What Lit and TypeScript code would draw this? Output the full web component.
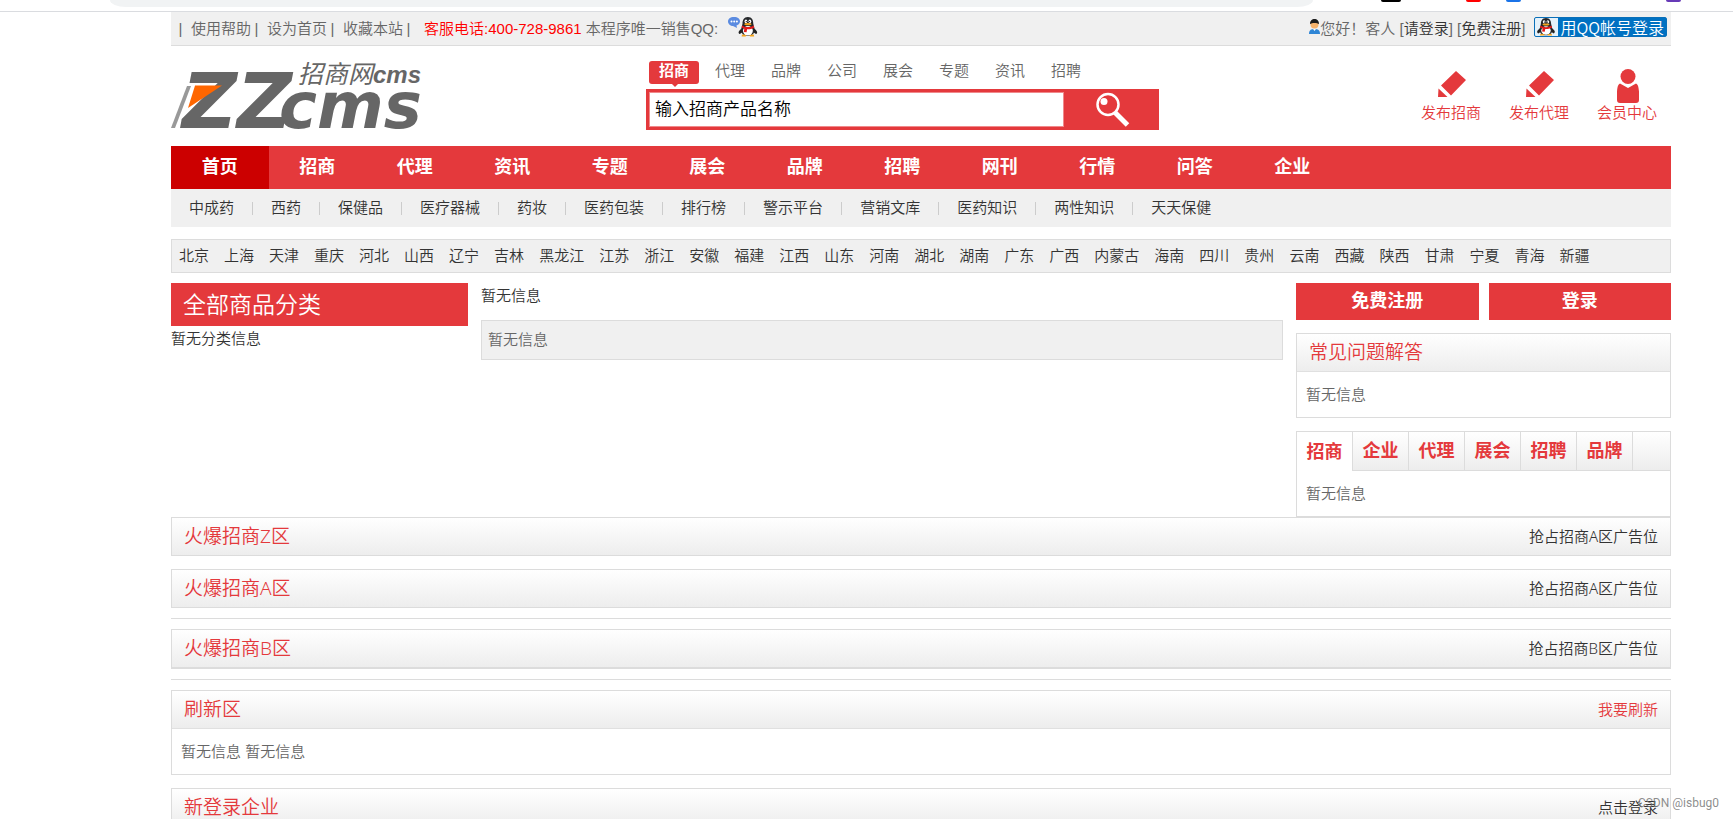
import { LitElement, html, css, svg, nothing } from "lit";
import { customElement, property, state } from "lit/decorators.js";
import { classMap } from "lit/directives/class-map.js";

const SEARCH_TABS = ["招商", "代理", "品牌", "公司", "展会", "专题", "资讯", "招聘"];
const NAV = ["首页", "招商", "代理", "资讯", "专题", "展会", "品牌", "招聘", "网刊", "行情", "问答", "企业"];
const SUBNAV = ["中成药", "西药", "保健品", "医疗器械", "药妆", "医药包装", "排行榜", "警示平台", "营销文库", "医药知识", "两性知识", "天天保健"];
const AREAS = "北京 上海 天津 重庆 河北 山西 辽宁 吉林 黑龙江 江苏 浙江 安徽 福建 江西 山东 河南 湖北 湖南 广东 广西 内蒙古 海南 四川 贵州 云南 西藏 陕西 甘肃 宁夏 青海 新疆".split(" ");
const RANK_TABS = ["招商", "企业", "代理", "展会", "招聘", "品牌"];

const penguin = svg`
  <path d="M4 12c-4 3-4 5-2 6l3-2zM18 12c4 3 4 5 2 6l-3-2z" fill="#222"/>
  <path d="M11 0C6.500 0 5 3.500 5 7L3.500 13c0 5 3 7 7.500 7s7.500-2 7.500-7L17 7c0-3.500-1.500-7-6-7z" fill="#26282b"/>
  <ellipse cx="11" cy="14.500" rx="5.500" ry="5" fill="#fff"/>
  <ellipse cx="8.800" cy="4.500" rx="1.500" ry="2" fill="#fff"/>
  <ellipse cx="13.200" cy="4.500" rx="1.500" ry="2" fill="#fff"/>
  <circle cx="9.200" cy="4.800" r=".7" fill="#111"/><circle cx="12.800" cy="4.800" r=".7" fill="#111"/>
  <ellipse cx="11" cy="7.500" rx="4" ry="1.200" fill="#f5a51c"/>
  <path d="M4.500 9c4 2.200 9 2.200 13 0l.6 2.200c-3 1.500-5.500 1.800-8 1.700L9.500 16l-3-.3.5-3.400-3-1.200z" fill="#e21a1a"/>
  <path d="M4.500 18.500l5 .5-1 1.500H4zM17.500 18.500l-5 .5 1 1.500H18z" fill="#f5a51c"/>`;

@customElement("title-panel")
export class TitlePanel extends LitElement {
  @property() heading = "";
  @property() more = "";
  @property({ type: Boolean }) hot = false;
  @property({ type: Boolean }) filled = false;

  static styles = css`
    :host { display: block; border: 1px solid #dcdcdc; box-sizing: border-box; }
    .head {
      display: flex; justify-content: space-between; align-items: center;
      height: 37px; padding: 0 12px;
      background: linear-gradient(#fff, #ededed);
    }
    .filled .head { border-bottom: 1px solid #e0e0e0; }
    h2 {
      margin: 0; color: #e4393c; font-weight: 350; font-size: 19px; line-height: 39px;
      font-family: "Noto Sans", "Noto Sans CJK SC", sans-serif;
    }
    a {
      color: #333; text-decoration: none; font-size: 15px; line-height: 37px;
      font-family: "Noto Sans", "Noto Sans CJK SC", sans-serif;
    }
    a.hot { color: #e4393c; }
  `;

  render() {
    return html`<section class=${classMap({ filled: this.filled })}>
      <div class="head">
        <h2>${this.heading}</h2>
        ${this.more ? html`<a href="#" class=${classMap({ hot: this.hot })}>${this.more}</a>` : nothing}
      </div>
      <slot></slot>
    </section>`;
  }
}

@customElement("app-root")
export class AppRoot extends LitElement {
  @state() private searchTab = 0;
  @state() private rankTab = 0;

  static styles = css`
    :host {
      display: block; position: relative; height: 100vh; overflow: hidden;
      background: #fff; color: #333; font-size: 15px; line-height: 20px;
      font-family: "Liberation Sans", "Noto Sans CJK SC", sans-serif; font-weight: 350;
    }
    * { box-sizing: border-box; }
    a { color: inherit; text-decoration: none; white-space: nowrap; }
    button { font: inherit; border: 0; margin: 0; padding: 0; background: none; cursor: pointer; white-space: nowrap; }
    .browser { display: flex; height: 12px; border-bottom: 1px solid #dadce0; padding: 0 52px 0 110px; }
    .omnibox { flex: 1; height: 7px; background: #f1f3f4; border-radius: 0 0 16px 16px / 0 0 7px 7px; margin-right: 68px; }
    .pips { display: grid; grid-template-columns: 20px 65px 15px 25px 15px 145px 15px; }
    .pip { height: 2px; border-radius: 0 0 3px 3px; }
    .black { background: #000; grid-column: 1; }
    .red { background: #f00; grid-column: 3; }
    .blue { background: #1a73e8; grid-column: 5; }
    .purple { background: #673ab7; grid-column: 7; }
    .page { padding: 0 62px 0 171px; }

    .topbar {
      display: flex; justify-content: space-between; align-items: center;
      height: 34px; padding: 0 4px 3px 4px; background: #f0f0f0; border-bottom: 1px solid #dcdcdc; color: #666;
    }
    .links, .user { display: flex; align-items: center; white-space: nowrap; }
    .links > * { padding-top: 4px; }
    .links .qq { padding: 0; margin-left: 10px; }
    .bar { width: 11px; text-align: center; }
    .links a { padding-left: 5px; }
    .phone { color: #f00; margin: 0 4px 0 10px; }
    .user .txt { padding-top: 4px; }
    .user a { color: #333; }
    .qqlogin {
      display: flex; align-items: center; height: 20px; margin-left: 9px; padding: 0 2px 0 1px;
      border: 1px solid #0a6fb8; border-radius: 2px; color: #fff; font-size: 16px; line-height: 18px;
      font-family: "Noto Sans CJK SC", sans-serif;
      background: linear-gradient(90deg, #e4f1fa 0 23px, #0071c2 23px);
    }
    .qqlogin svg { margin-right: 4px; }

    .header { display: grid; grid-template-columns: 475px 513px 1fr; height: 100px; }
    .logo { display: block; }
    .logo .big { font: italic bold 76px "DejaVu Sans", sans-serif; fill: #666; }
    .logo .mid { font: italic bold 64px "DejaVu Sans", sans-serif; fill: #666; }
    .logo .small { font: italic 400 25px "Noto Sans CJK SC", sans-serif; fill: #666; }
    .logo .latin { font: italic bold 24px "Liberation Sans", sans-serif; }

    .search { padding-top: 15px; }
    .stabs { display: flex; gap: 6px; padding: 0 3px; height: 28px; }
    .stabs button { position: relative; width: 50px; height: 23px; line-height: 20px; padding-bottom: 3px; color: #666; border-radius: 3px; }
    .stabs .on { background: #e4393c; color: #fff; font-weight: 700; }
    .stabs .on::after {
      content: ""; position: absolute; left: 22px; top: 22px;
      border: 4px solid transparent; border-top-color: #e4393c; border-bottom: 0;
    }
    .sbox { display: flex; height: 41px; padding: 3px 0 3px 3px; background: #e4393c; }
    .sbox input {
      flex: 1; min-width: 0; border: 1px solid #f0898b; padding: 0 5px; outline: 0; background: #fff;
      color: #000; font: inherit; font-size: 17px;
    }
    .sbox button { width: 95px; display: flex; justify-content: center; align-items: center; }
    .quick { display: flex; justify-content: flex-end; gap: 28px; padding: 21px 14px 0 0; }
    .quick a { display: flex; flex-direction: column; align-items: center; color: #e4393c; line-height: 20px; }
    .quick svg { display: block; }

    .nav { display: flex; background: #e4393c; height: 43px; }
    .nav a {
      width: 6.5%; text-align: center; color: #fff; font-size: 18px; font-weight: 700; line-height: 43px;
    }
    .nav .on { background: #c00; }
    .subnav { display: flex; align-items: center; height: 38px; background: #f0f0f0; }
    .subnav a { padding: 0 18px; line-height: 40px; }
    .subnav i { width: 1px; height: 13px; background: #ccc; }
    .areas {
      display: flex; gap: 15px; margin-top: 12px; padding: 0 7px; height: 34px;
      border: 1px solid #dcdcdc; background: #f0f0f0; line-height: 32px;
    }
    .columns { display: grid; grid-template-columns: 297fr 802fr 375fr; gap: 13px; margin-top: 10px; }
    .catitle {
      margin: 0; padding: 1px 12px 0; background: #e4393c; color: #fff;
      font-size: 23px; font-weight: 350; line-height: 42px;
    }
    .plain { margin: 0; line-height: 25px; }
    .notice { margin-top: 12px; padding: 0 6px; border: 1px solid #dcdcdc; background: #f0f0f0; line-height: 38px; color: #666; }
    .auth { display: grid; grid-template-columns: 1fr 1fr; gap: 10px; }
    .auth a { background: #e4393c; color: #fff; font-size: 18px; font-weight: 700; line-height: 37px; text-align: center; }
    .side > * + * { margin-top: 13px; }
    .msg { margin: 0; padding: 0 9px; line-height: 45px; color: #666; }
    .rank { border: 1px solid #dcdcdc; }
    .rtabs { display: flex; height: 39px; background: linear-gradient(#fff, #ededed); border-bottom: 1px solid #dcdcdc; }
    .rtabs button {
      width: 56px; height: 38px; border-right: 1px solid #dcdcdc; color: #e4393c; font-size: 18px; font-weight: 700;
    }
    .rtabs .on { background: #fff; height: 39px; }
    title-panel + title-panel { margin-top: 13px; }
    .rule { border: 0; border-top: 1px solid #dcdcdc; margin: 10px 0; }
    .base { height: 1px; background: #dcdcdc; }
    .mark {
      position: absolute; right: 14px; bottom: 7px; color: rgba(120, 120, 120, 0.85);
      font: 12px/18px Roboto, sans-serif;
    }
  `;

  private pencil() {
    return html`<svg width="60" height="36" viewBox="0 0 60 36" aria-hidden="true" fill="#e4393c">
      <path d="M35 4 45 13 30 28.500 20 18.500zM17.500 21.500 26.500 30H17z"/></svg>`;
  }

  render() {
    return html`
      <div class="browser">
        <div class="omnibox"></div>
        <div class="pips">
          <div class="pip black"></div><div class="pip red"></div><div class="pip blue"></div><div class="pip purple"></div>
        </div>
      </div>
      <div class="page">
        <div class="topbar">
          <div class="links">
            <span class="bar">|</span>
            ${["使用帮助", "设为首页", "收藏本站"].map((t) => html`<a href="#">${t}</a><span class="bar">|</span>`)}
            <span class="phone">客服电话:400-728-9861</span><span>本程序唯一销售QQ:</span>
            <svg class="qq" width="31" height="22" viewBox="0 0 31 22" aria-hidden="true">
              <path d="M6 1C2 1 0 3 0 5.500S2.500 10 5 10l4 2-.5-2.500C11 8.500 12 7 12 5.500 12 3 10 1 6 1z" fill="#5b8be0"/>
              <g fill="#fff"><circle cx="3.500" cy="5.500" r="1"/><circle cx="6.200" cy="5.500" r="1"/><circle cx="8.900" cy="5.500" r="1"/></g>
              <g transform="translate(10 1) scale(.9 .95)">${penguin}</g>
            </svg>
          </div>
          <div class="user">
            <svg width="11" height="16" viewBox="0 0 11 16" aria-hidden="true">
              <path d="M0 15c0-4 2-5 5.500-5S11 11 11 15z" fill="#2f86d6"/><circle cx="5.500" cy="5.500" r="4" fill="#f5b26b"/>
              <path d="M1 5C1 1.500 3 0 5.500 0S10 1.500 10 5C8 3.500 3 3.500 1 5z" fill="#1b1b1b"/><path d="M4 10l1.500 2L7 10z" fill="#fff"/>
            </svg>
            <span class="txt">您好！客人 [<a href="#">请登录</a>] [<a href="#">免费注册</a>]</span>
            <button class="qqlogin">
              <svg width="20" height="18" viewBox="0 0 22 21" aria-hidden="true">${penguin}</svg>用QQ帐号登录
            </button>
          </div>
        </div>

        <div class="header">
          <svg class="logo" width="260" height="100" viewBox="0 0 260 100" role="img" aria-label="ZZCMS 招商网">
            <path d="M16 40h4L4 82H0z" fill="#999"/>
            <text class="big" x="11" y="82">ZZ</text>
            <path d="M24 39.500h27L17 62z" fill="#f60"/>
            <text class="mid" x="108" y="82">cms</text>
            <text class="small" x="127" y="37">招商网<tspan class="latin">cms</tspan></text>
          </svg>
          <div class="search">
            <div class="stabs">
              ${SEARCH_TABS.map((t, i) => html`<button class=${classMap({ on: i === this.searchTab })} @click=${() => (this.searchTab = i)}>${t}</button>`)}
            </div>
            <form class="sbox" @submit=${(e: Event) => e.preventDefault()}>
              <input type="text" aria-label="搜索" value="输入招商产品名称" />
              <button aria-label="搜索">
                <svg width="36" height="36" viewBox="0 0 36 36" fill="none" aria-hidden="true">
                  <circle cx="14" cy="12.500" r="10.500" stroke="#fff" stroke-width="2.500"/><circle cx="10" cy="9.500" r="3.500" fill="#fff"/>
                  <path d="M21 20.500 33.500 33" stroke="#fff" stroke-width="5"/>
                </svg>
              </button>
            </form>
          </div>
          <div class="quick">
            <a href="#">${this.pencil()}发布招商</a>
            <a href="#">${this.pencil()}发布代理</a>
            <a href="#"><svg width="60" height="36" viewBox="0 0 60 36" fill="#e4393c" aria-hidden="true">
              <circle cx="31" cy="9.500" r="7.500"/><path d="M23 16.500 31 21l8-4.500c2 1 2.500 3 3 8V33c0 2-1 3-3 3H23c-2 0-3-1-3-3v-8.500c.5-5 1-7 3-8z"/></svg>会员中心</a>
          </div>
        </div>

        <nav class="nav">${NAV.map((t, i) => html`<a href="#" class=${classMap({ on: i === 0 })}>${t}</a>`)}</nav>
        <nav class="subnav">${SUBNAV.map((t, i) => html`${i ? html`<i></i>` : nothing}<a href="#">${t}</a>`)}</nav>
        <nav class="areas">${AREAS.map((t) => html`<a href="#">${t}</a>`)}</nav>

        <div class="columns">
          <div>
            <h2 class="catitle">全部商品分类</h2>
            <p class="plain">暂无分类信息</p>
          </div>
          <div>
            <p class="plain">暂无信息</p>
            <div class="notice">暂无信息</div>
          </div>
          <div class="side">
            <div class="auth"><a href="#">免费注册</a><a href="#">登录</a></div>
            <title-panel heading="常见问题解答" filled><p class="msg">暂无信息</p></title-panel>
            <div class="rank">
              <div class="rtabs">
                ${RANK_TABS.map((t, i) => html`<button class=${classMap({ on: i === this.rankTab })} @click=${() => (this.rankTab = i)}>${t}</button>`)}
              </div>
              <p class="msg">暂无信息</p>
            </div>
          </div>
        </div>

        <title-panel heading="火爆招商Z区" more="抢占招商A区广告位"></title-panel>
        <title-panel heading="火爆招商A区" more="抢占招商A区广告位"></title-panel>
        <hr class="rule" />
        <title-panel heading="火爆招商B区" more="抢占招商B区广告位"><div class="base"></div></title-panel>
        <hr class="rule" />
        <title-panel heading="刷新区" more="我要刷新" hot filled><p class="msg">暂无信息 暂无信息</p></title-panel>
        <title-panel heading="新登录企业" more="点击登录" filled><p class="msg">暂无信息</p></title-panel>
      </div>
      <div class="mark">CSDN @isbug0</div>
    `;
  }
}
